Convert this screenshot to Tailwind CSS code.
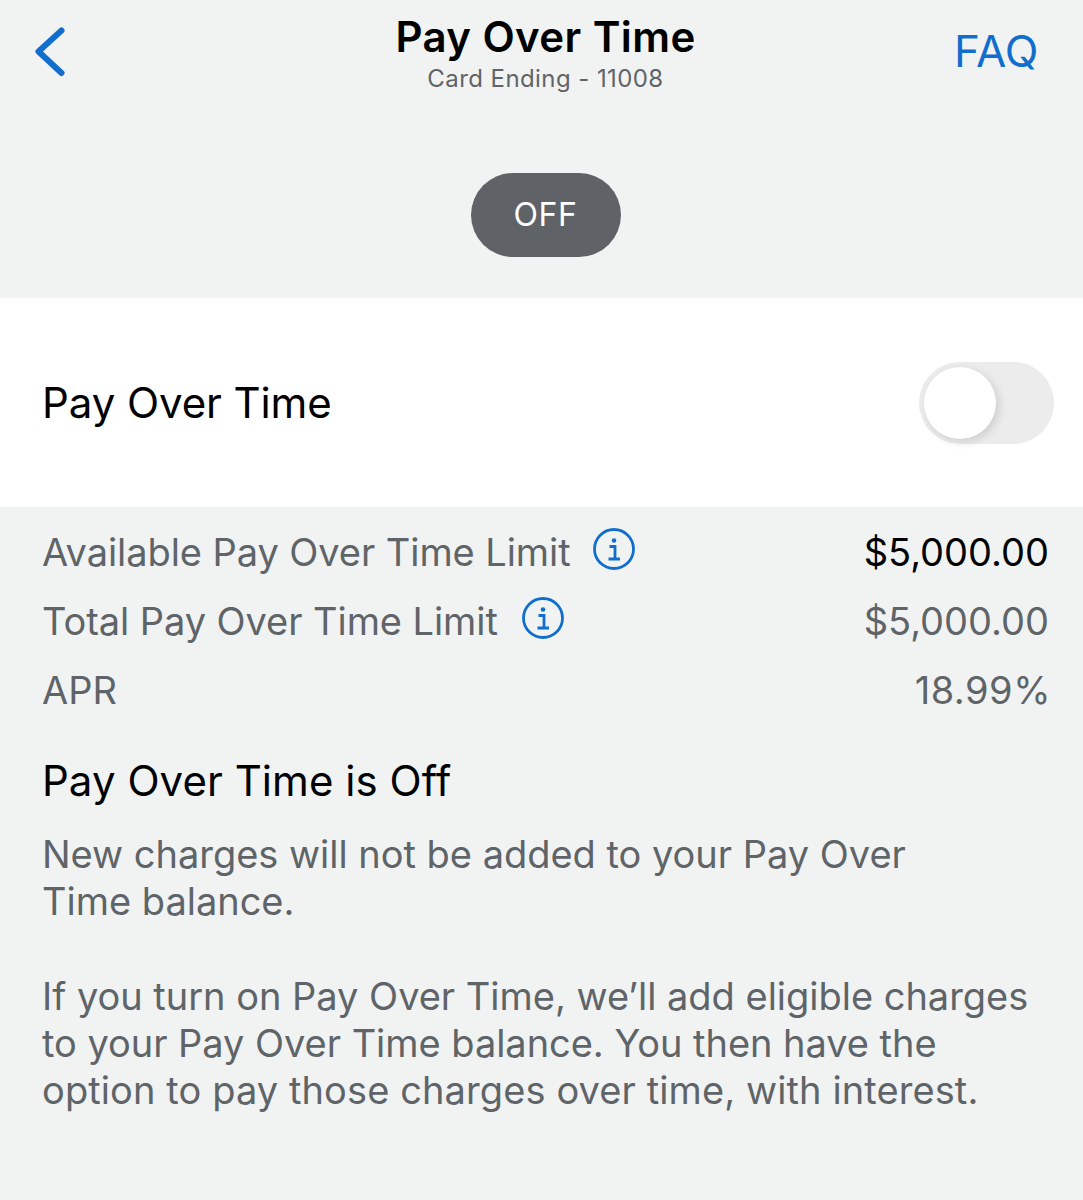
<!DOCTYPE html>
<html lang="en">
<head>
<meta charset="UTF-8" />
<title>Pay Over Time</title>
<script src="https://cdn.jsdelivr.net/npm/@tailwindcss/browser@4"></script>
</head>
<body class="bg-[#f1f3f3] font-[Inter,sans-serif] h-[1200px] overflow-hidden">
    <!-- header -->
    <div class="relative h-[298px] pl-[8px] flex flex-col items-center">
        <svg class="absolute left-[34px] top-[26px]" width="32" height="52" viewBox="0 0 32 52" fill="none">
            <path d="M27.500 4.500 L4.500 25.500 L27.500 47" stroke="#116ecd" stroke-width="6" stroke-linecap="round" stroke-linejoin="round" />
        </svg>
        <span class="absolute left-[954px] top-[25px] text-[44px] leading-[52px] text-[#116ecd]">FAQ</span>
        <h1 class="mt-[12px] text-[42px] leading-[50px] font-semibold text-black tracking-[0.4px]">Pay Over Time</h1>
        <p class="text-[24px] leading-[34px] text-[#5f6468] tracking-[0.42px]">Card Ending - 11008</p>
        <div class="mt-[77px] w-[150px] h-[84px] rounded-full bg-[#5f6368] flex items-center justify-center text-[32px] text-white tracking-[0.6px]">OFF</div>
    </div>

    <!-- toggle row -->
    <div class="h-[209px] bg-white flex items-center justify-between pl-[42px] pr-[29px]">
        <span class="text-[42px] text-black tracking-[-0.08px]">Pay Over Time</span>
        <div class="w-[135px] h-[82px] rounded-full bg-[#ececec] p-[5px]">
            <div class="w-[72px] h-[72px] rounded-full bg-white shadow-[3px_3px_10px_rgba(0,0,0,0.13)]"></div>
        </div>
    </div>

    <!-- limits -->
    <div class="pl-[42px] pr-[34px] pt-[11px] text-[38px] text-[#5f6468]">
        <div class="h-[69px] flex items-center justify-between">
            <div class="flex items-center gap-[22px]">
                <span class="tracking-[-0.07px]">Available Pay Over Time Limit</span>
                <svg width="42" height="42" viewBox="0 0 42 42" fill="none" class="-mt-[8px]">
                    <circle cx="21" cy="21" r="19.500" stroke="#116ecd" stroke-width="2.800" />
                    <circle cx="21" cy="12.500" r="2.300" fill="#116ecd" />
                    <path d="M16.500 18.500 H22 V31 M15.500 31 H27" stroke="#116ecd" stroke-width="2.800" />
                </svg>
            </div>
            <span class="text-black">$5,000.00</span>
        </div>
        <div class="h-[69px] flex items-center justify-between">
            <div class="flex items-center gap-[24px]">
                <span class="tracking-[-0.07px]">Total Pay Over Time Limit</span>
                <svg width="42" height="42" viewBox="0 0 42 42" fill="none" class="-mt-[8px]">
                    <circle cx="21" cy="21" r="19.500" stroke="#116ecd" stroke-width="2.800" />
                    <circle cx="21" cy="12.500" r="2.300" fill="#116ecd" />
                    <path d="M16.500 18.500 H22 V31 M15.500 31 H27" stroke="#116ecd" stroke-width="2.800" />
                </svg>
            </div>
            <span>$5,000.00</span>
        </div>
        <div class="h-[69px] flex items-center justify-between">
            <span>APR</span>
            <span class="tracking-[0.5px] -mr-[2px]">18.99%</span>
        </div>
    </div>

    <!-- description -->
    <div class="pl-[42px] pr-[34px] pt-[30px]">
        <h2 class="text-[42px] leading-[52px] text-black tracking-[0.05px]">Pay Over Time is Off</h2>
        <p class="mt-[24px] text-[38px] leading-[47px] text-[#5f6468] tracking-[-0.02px]">New charges will not be added to your Pay Over<br />Time balance.</p>
        <p class="mt-[48px] text-[38px] leading-[47px] text-[#5f6468]">
            <span class="tracking-[-0.02px]">If you turn on Pay Over Time, we’ll add eligible charges</span><br />
            <span class="tracking-[-0.04px]">to your Pay Over Time balance. You then have the</span><br />
            <span class="tracking-[0.1px]">option to pay those charges over time, with interest.</span>
        </p>
    </div>
</body>
</html>
